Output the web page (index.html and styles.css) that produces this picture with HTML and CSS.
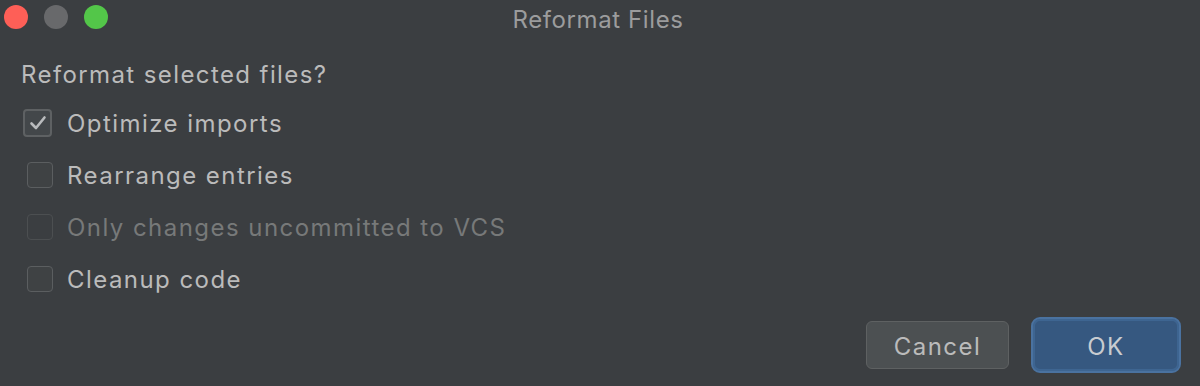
FILE: index.html
```html
<!DOCTYPE html>
<html>
<head>
<meta charset="utf-8">
<link rel="stylesheet" href="styles.css">
</head>
<body>
<div class="dialog">
  <div class="titlebar">
    <div class="lights">
      <span class="light red"></span>
      <span class="light gray"></span>
      <span class="light green"></span>
    </div>
    <div class="title">Reformat Files</div>
  </div>
  <div class="content">
    <div class="question">Reformat selected files?</div>
    <div class="options">
      <div class="option">
        <span class="box checked">
          <svg width="18" height="16" viewBox="0 0 18 16"><path d="M2.5 8.5 L7 13 L15.5 2.5" fill="none" stroke="#b9bbbd" stroke-width="2.6" stroke-linecap="round" stroke-linejoin="round"/></svg>
        </span>
        <span class="label">Optimize imports</span>
      </div>
      <div class="option">
        <span class="box"></span>
        <span class="label">Rearrange entries</span>
      </div>
      <div class="option disabled">
        <span class="box"></span>
        <span class="label">Only changes uncommitted to VCS</span>
      </div>
      <div class="option">
        <span class="box"></span>
        <span class="label">Cleanup code</span>
      </div>
    </div>
  </div>
  <div class="buttons">
    <button class="btn cancel">Cancel</button>
    <button class="btn ok">OK</button>
  </div>
</div>
</body>
</html>
```

FILE: styles.css
```css
html, body {
  margin: 0;
  padding: 0;
  background: #3c3f41;
}
body {
  font-family: "Inter", "Liberation Sans", sans-serif;
  color: #bbbbbb;
  width: 1200px;
  height: 386px;
  overflow: hidden;
}
.dialog {
  width: 1200px;
  height: 386px;
  display: flex;
  flex-direction: column;
  background: #3b3e41;
}
.titlebar {
  position: relative;
  height: 38px;
  display: flex;
  align-items: center;
  justify-content: center;
}
.lights {
  position: absolute;
  left: 4px;
  top: 5px;
  display: flex;
  gap: 16px;
}
.light {
  width: 24px;
  height: 24px;
  border-radius: 50%;
  display: block;
}
.light.red { background: #fe5f57; }
.light.gray { background: #68696b; }
.light.green { background: #53c649; }
.title {
  font-size: 24px;
  color: #9b9c9d;
  letter-spacing: 0.6px;
  margin-left: -4px;
}
.content {
  padding: 22px 0 0 21px;
}
.question {
  font-size: 24px;
  line-height: 30px;
  color: #bbbbbb;
  letter-spacing: 1.4px;
}
.options {
  display: flex;
  flex-direction: column;
  margin-top: 7px;
}
.option {
  height: 52px;
  display: flex;
  align-items: center;
}
.box {
  box-sizing: border-box;
  width: 26px;
  height: 26px;
  margin-left: 6px;
  margin-right: 14px;
  border: 1.5px solid #5b5e60;
  border-radius: 4px;
  background: #3f4244;
  display: flex;
  align-items: center;
  justify-content: center;
}
.box.checked {
  width: 29px;
  height: 28px;
  margin-left: 2px;
  margin-right: 15px;
  border: 2px solid #5e6163;
  background: #43474a;
}
.label {
  font-size: 24px;
  letter-spacing: 1.45px;
  color: #bbbbbb;
}
.disabled .label { color: #777979; }
.disabled .box { border-color: #4c4f51; background: #3b3e41; }
.buttons {
  margin-top: auto;
  display: flex;
  justify-content: flex-end;
  align-items: center;
  gap: 22px;
  padding: 0 19px 13px 0;
}
.btn {
  font-family: "Inter", "Liberation Sans", sans-serif;
  font-size: 24px;
  box-sizing: border-box;
  height: 48px;
  border-radius: 6px;
  color: #bbbbbb;
  letter-spacing: 1.5px;
  padding-top: 3px;
}
.cancel {
  width: 143px;
  background: #4c5052;
  border: 1.5px solid #5e6162;
}
.ok {
  width: 150px;
  height: 56px;
  background: #365880;
  border: 2px solid #4a72a0;
  box-shadow: inset 0 0 0 2px #3e6591;
  color: #c9ccd0;
  border-radius: 9px;
}
```
